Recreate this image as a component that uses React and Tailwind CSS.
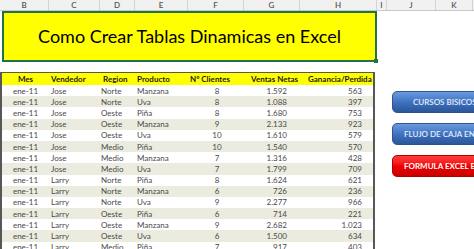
import React from "react";

const cols = [
  { key: "B", w: "w-[49px]" },
  { key: "C", w: "w-[51px]" },
  { key: "D", w: "w-[35px]" },
  { key: "E", w: "w-[53px]" },
  { key: "F", w: "w-[56px]" },
  { key: "G", w: "w-[56px]" },
  { key: "H", w: "w-[77px]" },
  { key: "I", w: "w-[10px]" },
  { key: "J", w: "w-[49px]" },
  { key: "K", w: "w-[37px]" },
];

const rows = [
  ["Jose", "Norte", "Manzana", "8", "1.592", "563"],
  ["Jose", "Norte", "Uva", "8", "1.088", "397"],
  ["Jose", "Oeste", "Piña", "8", "1.680", "753"],
  ["Jose", "Oeste", "Manzana", "9", "2.133", "923"],
  ["Jose", "Oeste", "Uva", "10", "1.610", "579"],
  ["Jose", "Medio", "Piña", "10", "1.540", "570"],
  ["Jose", "Medio", "Manzana", "7", "1.316", "428"],
  ["Jose", "Medio", "Uva", "7", "1.799", "709"],
  ["Larry", "Norte", "Piña", "8", "1.624", "621"],
  ["Larry", "Norte", "Manzana", "6", "726", "236"],
  ["Larry", "Norte", "Uva", "9", "2.277", "966"],
  ["Larry", "Oeste", "Piña", "6", "714", "221"],
  ["Larry", "Oeste", "Manzana", "9", "2.682", "1.023"],
  ["Larry", "Oeste", "Uva", "6", "1.500", "634"],
  ["Larry", "Medio", "Piña", "7", "917", "403"],
];

function ColumnHeader() {
  return (
    <div className="flex h-[11px] bg-[#f1f1f1] border-b border-[#c8c8c8] text-[8px] leading-[10px] text-[#555] font-semibold">
      {cols.map((c) => (
        <div
          key={c.key}
          className={`${c.w} shrink-0 border-r border-[#d4d4d4] text-center`}
        >
          {c.key}
        </div>
      ))}
      <div className="flex-1" />
    </div>
  );
}

export default function App() {
  return (
    <div className="w-[474px] h-[249px] overflow-hidden bg-white font-['Lato','Open_Sans',sans-serif]">
      <ColumnHeader />
      <div className="flex">
        {/* sheet area */}
        <div className="w-[377px] shrink-0">
          <div className="relative ml-[2px] w-[375px] h-[51px] bg-[#ffff00] border-2 border-[#217346] flex items-center justify-center text-[18px] text-black">
            Como Crear Tablas Dinamicas en Excel
            <span className="absolute -right-[3px] -bottom-[3px] w-[4px] h-[4px] bg-[#217346]" />
          </div>

          <div className="mt-[10px] w-[375px] border-l-2 border-r-2 border-t border-[#575757] text-[8px]">
            <div className="flex h-[12px] items-center bg-[#ffff00] font-bold text-[#1a1a1a] leading-none">
              <div className="w-[47px] text-center">Mes</div>
              <div className="w-[51px] pl-[2px]">Vendedor</div>
              <div className="w-[35px] pl-[3px]">Region</div>
              <div className="w-[53px] pl-[2px]">Producto</div>
              <div className="w-[56px] pl-[2px]">Nº Clientes</div>
              <div className="w-[56px] pl-[7px]">Ventas Netas</div>
              <div className="w-[73px] pl-[8px] whitespace-nowrap">Ganancia/Perdida</div>
            </div>
            {rows.map((r, i) => (
              <div
                key={i}
                className={`flex h-[11.2px] items-center leading-none text-[#4a4a4a] ${
                  i % 2 === 1 ? "bg-[#ecebdf]" : "bg-white"
                }`}
              >
                <div className="w-[47px] text-center">ene-11</div>
                <div className="w-[51px] pl-[2px]">{r[0]}</div>
                <div className="w-[35px] pl-[1px]">{r[1]}</div>
                <div className="w-[53px] pl-[2px]">{r[2]}</div>
                <div className="w-[56px] text-center pl-[2px]">{r[3]}</div>
                <div className="w-[56px] text-right pr-[13px]">{r[4]}</div>
                <div className="w-[73px] text-right pr-[11px]">{r[5]}</div>
              </div>
            ))}
          </div>
        </div>

        {/* buttons */}
        <div className="flex-1 pl-[15px] pt-[80px] flex flex-col gap-[10px] overflow-hidden">
          <div className="w-[120px] h-[22px] shrink-0 rounded-[5px] border border-[#2f5590] bg-gradient-to-b from-[#6b9be0] via-[#3f72c0] to-[#2b5699] text-[8px] font-semibold text-[#e6eefa] flex items-center pl-[20px] whitespace-nowrap">
            CURSOS BISICOS
          </div>
          <div className="w-[120px] h-[22px] shrink-0 rounded-[5px] border border-[#2f5590] bg-gradient-to-b from-[#6b9be0] via-[#3f72c0] to-[#2b5699] text-[8px] font-semibold text-[#e6eefa] flex items-center pl-[11px] whitespace-nowrap">
            FLUJO DE CAJA EN
          </div>
          <div className="w-[120px] h-[22px] shrink-0 rounded-[5px] border border-[#b00000] bg-gradient-to-b from-[#ff3b3b] via-[#f00000] to-[#c80000] text-[8px] font-bold text-white flex items-center pl-[11px] whitespace-nowrap">
            FORMULA EXCEL E
          </div>
        </div>
      </div>
    </div>
  );
}
